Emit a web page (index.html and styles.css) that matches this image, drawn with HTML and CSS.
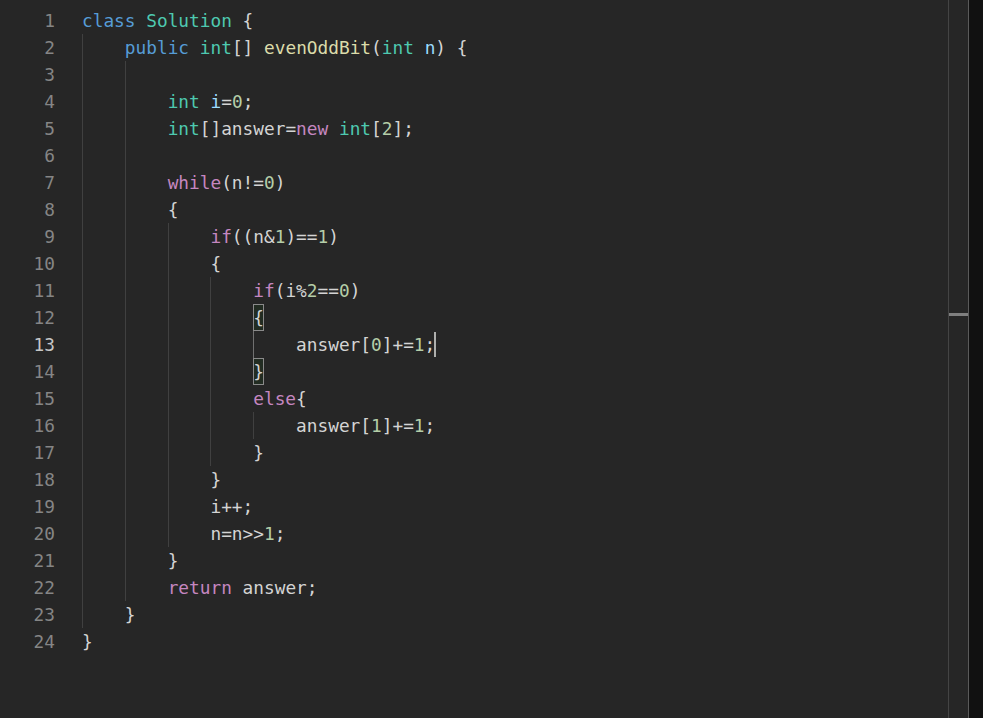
FILE: index.html
```html
<!DOCTYPE html>
<html>
<head>
<meta charset="utf-8">
<link rel="stylesheet" href="styles.css">
</head>
<body>
<div class="editor">
  <div class="gutter">
    <div class="num">1</div><div class="num">2</div><div class="num">3</div><div class="num">4</div>
    <div class="num">5</div><div class="num">6</div><div class="num">7</div><div class="num">8</div>
    <div class="num">9</div><div class="num">10</div><div class="num">11</div><div class="num">12</div>
    <div class="num active">13</div><div class="num">14</div><div class="num">15</div><div class="num">16</div>
    <div class="num">17</div><div class="num">18</div><div class="num">19</div><div class="num">20</div>
    <div class="num">21</div><div class="num">22</div><div class="num">23</div><div class="num">24</div>
  </div>
  <div class="code">
    <div class="ln"><span class="t"><span class="k">class</span> <span class="ty">Solution</span> {</span></div>
    <div class="ln"><span class="g"></span><span class="t"><span class="k">public</span> <span class="ty">int</span>[] <span class="f">evenOddBit</span>(<span class="ty">int</span> <span class="v">n</span>) {</span></div>
    <div class="ln"><span class="g"></span><span class="g"></span></div>
    <div class="ln"><span class="g"></span><span class="g"></span><span class="t"><span class="ty">int</span> <span class="v">i</span>=<span class="n">0</span>;</span></div>
    <div class="ln"><span class="g"></span><span class="g"></span><span class="t"><span class="ty">int</span>[]answer=<span class="c">new</span> <span class="ty">int</span>[<span class="n">2</span>];</span></div>
    <div class="ln"><span class="g"></span><span class="g"></span></div>
    <div class="ln"><span class="g"></span><span class="g"></span><span class="t"><span class="c">while</span>(n!=<span class="n">0</span>)</span></div>
    <div class="ln"><span class="g"></span><span class="g"></span><span class="t">{</span></div>
    <div class="ln"><span class="g"></span><span class="g"></span><span class="g"></span><span class="t"><span class="c">if</span>((n&amp;<span class="n">1</span>)==<span class="n">1</span>)</span></div>
    <div class="ln"><span class="g"></span><span class="g"></span><span class="g"></span><span class="t">{</span></div>
    <div class="ln"><span class="g"></span><span class="g"></span><span class="g"></span><span class="g"></span><span class="t"><span class="c">if</span>(i%<span class="n">2</span>==<span class="n">0</span>)</span></div>
    <div class="ln"><span class="g"></span><span class="g"></span><span class="g"></span><span class="g"></span><span class="t"><span class="bm">{</span></span></div>
    <div class="ln"><span class="g"></span><span class="g"></span><span class="g"></span><span class="g"></span><span class="g ga"></span><span class="t">answer[<span class="n">0</span>]+=<span class="n">1</span>;<span class="cur"></span></span></div>
    <div class="ln"><span class="g"></span><span class="g"></span><span class="g"></span><span class="g"></span><span class="t"><span class="bm">}</span></span></div>
    <div class="ln"><span class="g"></span><span class="g"></span><span class="g"></span><span class="g"></span><span class="t"><span class="c">else</span>{</span></div>
    <div class="ln"><span class="g"></span><span class="g"></span><span class="g"></span><span class="g"></span><span class="g"></span><span class="t">answer[<span class="n">1</span>]+=<span class="n">1</span>;</span></div>
    <div class="ln"><span class="g"></span><span class="g"></span><span class="g"></span><span class="g"></span><span class="t">}</span></div>
    <div class="ln"><span class="g"></span><span class="g"></span><span class="g"></span><span class="t">}</span></div>
    <div class="ln"><span class="g"></span><span class="g"></span><span class="g"></span><span class="t">i++;</span></div>
    <div class="ln"><span class="g"></span><span class="g"></span><span class="g"></span><span class="t">n=n&gt;&gt;<span class="n">1</span>;</span></div>
    <div class="ln"><span class="g"></span><span class="g"></span><span class="t">}</span></div>
    <div class="ln"><span class="g"></span><span class="g"></span><span class="t"><span class="c">return</span> answer;</span></div>
    <div class="ln"><span class="g"></span><span class="t">}</span></div>
    <div class="ln"><span class="t">}</span></div>
  </div>
  <div class="ruler"><div class="mark"></div></div>
  <div class="edge"></div>
</div>
</body>
</html>
```

FILE: styles.css
```css
html, body {
  margin: 0;
  padding: 0;
  background: #262626;
}

.editor {
  display: flex;
  width: 983px;
  height: 718px;
  background: #262626;
  font-family: "DejaVu Sans Mono", "Liberation Mono", monospace;
  font-size: 17.8px;
  color: #d4d4d4;
  overflow: hidden;
}

.gutter {
  width: 82px;
  flex: none;
  box-sizing: border-box;
  padding: 7px 27px 0 0;
  text-align: right;
  color: #858585;
}

.num {
  height: 27px;
  line-height: 27px;
}

.num.active {
  color: #c6c6c6;
}

.code {
  flex: 1;
  padding-top: 7px;
}

.ln {
  display: flex;
  height: 27px;
  line-height: 27px;
}

.g {
  flex: none;
  width: 4ch;
  height: 27px;
  background: linear-gradient(#404040, #404040) no-repeat left top / 1px 100%;
}

.g.ga {
  background-image: linear-gradient(#707070, #707070);
}

.t {
  white-space: pre;
}

.k { color: #569cd6; }
.ty { color: #4ec9b0; }
.f { color: #dcdcaa; }
.c { color: #c586c0; }
.v { color: #9cdcfe; }
.n { color: #b5cea8; }

.bm {
  display: inline-block;
  height: 27px;
  vertical-align: top;
  outline: 1px solid #8a8a8a;
  outline-offset: -1px;
  background: rgba(0, 100, 0, 0.1);
}

.cur {
  display: inline-block;
  width: 2px;
  height: 25px;
  margin-left: -1px;
  vertical-align: top;
  margin-top: 1px;
  background: #aeafad;
}

.ruler {
  position: relative;
  flex: none;
  width: 19px;
  border-left: 1px solid #444444;
  border-right: 1px solid #5a5a5a;
}

.mark {
  position: absolute;
  left: 0;
  right: 0;
  top: 313px;
  height: 3px;
  background: #7f7f7f;
}

.edge {
  flex: none;
  width: 14px;
  background: #111111;
}
```
